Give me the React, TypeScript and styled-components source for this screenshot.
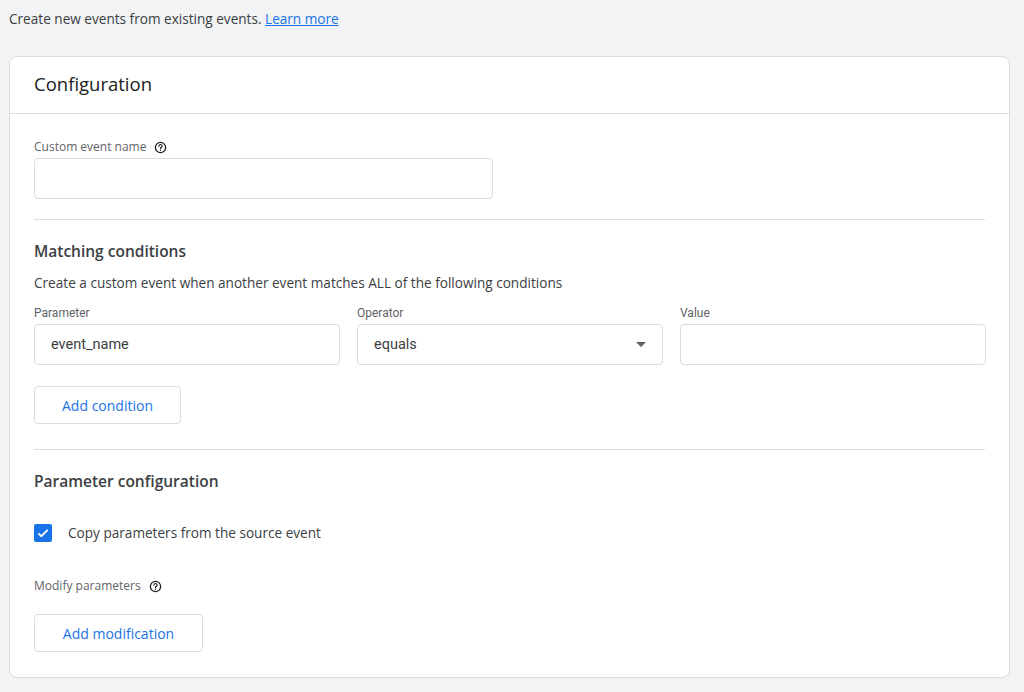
import React from "react";
import styled, { createGlobalStyle } from "styled-components";

const Global = createGlobalStyle`
  html, body { margin: 0; padding: 0; background: #f1f3f4; }
  body { font-family: "Open Sans", Roboto, "Liberation Sans", sans-serif; color: #3c4043; }
`;

const Page = styled.div`
  padding: 9px 14px 14px 9px;
  width: 1024px;
  box-sizing: border-box;
`;

const Intro = styled.div`
  font-size: 13.6px;
  line-height: 20px;
  color: #3c4043;
  height: 47px;
  a { color: #1a73e8; text-decoration: underline; }
`;

const Card = styled.div`
  background: #fff;
  border: 1px solid #dadce0;
  border-radius: 8px;
  width: 1001px;
  box-sizing: border-box;
`;

const CardHeader = styled.div`
  height: 57px;
  border-bottom: 1px solid #dadce0;
  display: flex;
  align-items: center;
  padding: 0 24px 3px;
  box-sizing: border-box;
  font-size: 18.5px;
  color: #202124;
  font-family: "Open Sans", Roboto, sans-serif;
`;

const Body = styled.div`
  padding: 25px 24px 25px 24px;
  display: flex;
  flex-direction: column;
`;

const Label = styled.div<{ $top?: number; $narrow?: boolean }>`
  font-family: ${p => (p.$narrow ? "Roboto, sans-serif" : "'Open Sans', Roboto, sans-serif")};
  font-size: 12px;
  line-height: 16px;
  color: #5f6368;
  display: flex;
  align-items: center;
  gap: 8px;
  margin-bottom: 3px;
  margin-top: ${p => p.$top ?? 0}px;
`;

const Input = styled.div<{ $w?: number }>`
  height: 41px;
  box-sizing: border-box;
  border: 1px solid #dadce0;
  border-radius: 4px;
  width: ${p => (p.$w ? p.$w + "px" : "100%")};
  display: flex;
  align-items: center;
  justify-content: space-between;
  padding: 0 16px;
  font-family: Roboto, sans-serif;
  font-size: 14.5px;
  color: #3c4043;
`;

const Divider = styled.div<{ $top: number }>`
  height: 1px;
  background: #dadce0;
  margin-top: ${p => p.$top}px;
`;

const SectionTitle = styled.div<{ $top: number }>`
  font-size: 15.5px;
  font-weight: 600;
  color: #3c4043;
  line-height: 24px;
  margin-top: ${p => p.$top}px;
`;

const Desc = styled.div`
  font-size: 13.6px;
  line-height: 20px;
  margin-top: 10px;
  color: #3c4043;
`;

const Grid = styled.div`
  display: grid;
  grid-template-columns: repeat(3, 306px);
  column-gap: 17px;
  margin-top: 12px;
`;

const Button = styled.button<{ $top: number; $w: number }>`
  margin-top: ${p => p.$top}px;
  width: ${p => p.$w}px;
  height: 38px;
  background: #fff;
  border: 1px solid #dadce0;
  border-radius: 4px;
  color: #1a73e8;
  font-family: "Open Sans", Roboto, sans-serif;
  font-size: 14px;
  font-weight: 500;
  cursor: pointer;
`;

const CheckRow = styled.div`
  display: flex;
  align-items: center;
  gap: 16px;
  margin-top: 30px;
  font-size: 13.6px;
  color: #3c4043;
`;

const Box = styled.div`
  width: 18px;
  height: 18px;
  background: #1a73e8;
  border-radius: 2px;
  display: flex;
  align-items: center;
  justify-content: center;
`;

const Help = () => (
  <svg width="13" height="13" viewBox="0 0 24 24">
    <circle cx="12" cy="12" r="9.5" fill="none" stroke="#202124" strokeWidth="2.4" />
    <path d="M9 9.5a3 3 0 1 1 4.2 2.7c-.8.4-1.2 1-1.2 1.8v.5" fill="none" stroke="#202124" strokeWidth="2.2" strokeLinecap="round" />
    <circle cx="12" cy="17.3" r="1.3" fill="#202124" />
  </svg>
);

export default function App() {
  return (
    <>
      <Global />
      <Page>
        <Intro>
          Create new events from existing events. <a href="#">Learn more</a>
        </Intro>
        <Card>
          <CardHeader>Configuration</CardHeader>
          <Body>
            <Label>Custom event name <Help /></Label>
            <Input $w={459} />
            <Divider $top={20} />
            <SectionTitle $top={19}>Matching conditions</SectionTitle>
            <Desc>Create a custom event when another event matches ALL of the following conditions</Desc>
            <Grid>
              <div><Label $narrow>Parameter</Label><Input>event_name</Input></div>
              <div>
                <Label $narrow>Operator</Label>
                <Input>
                  equals
                  <svg width="10" height="5" viewBox="0 0 10 5"><path d="M0 0h10L5 5z" fill="#5f6368" /></svg>
                </Input>
              </div>
              <div><Label $narrow>Value</Label><Input /></div>
            </Grid>
            <Button $top={21} $w={147}>Add condition</Button>
            <Divider $top={25} />
            <SectionTitle $top={19}>Parameter configuration</SectionTitle>
            <CheckRow>
              <Box>
                <svg width="14" height="14" viewBox="0 0 24 24"><path d="M4 12.5l5 5L20 6.5" fill="none" stroke="#fff" strokeWidth="3" /></svg>
              </Box>
              Copy parameters from the source event
            </CheckRow>
            <Label $top={36}>Modify parameters <Help /></Label>
            <Button $top={17} $w={169}>Add modification</Button>
          </Body>
        </Card>
      </Page>
    </>
  );
}
